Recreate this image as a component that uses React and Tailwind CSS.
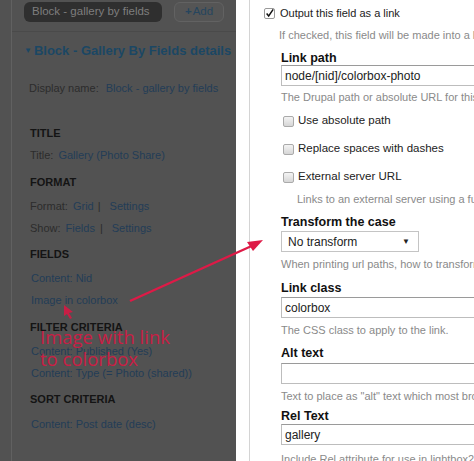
const Row = ({ children, className = "" }) => (
  <div className={"h-[22px] flex items-center whitespace-nowrap " + className}>{children}</div>
);

const Head = ({ children, className = "" }) => (
  <Row className={"font-bold text-[11px] text-[#141414] pl-[18px] " + className}>{children}</Row>
);

const Item = ({ children, className = "" }) => (
  <Row className={"text-[11px] text-[#233d57] pl-[19px] " + className}>{children}</Row>
);

const Box = ({ checked }) => (
  <span
    className={
      "inline-flex w-[11px] h-[11px] rounded-[2px] border items-center justify-center shrink-0 " +
      (checked ? "border-[#999] bg-white" : "border-[#aaa] bg-gradient-to-b from-[#f4f4f4] to-[#d6d6d6]")
    }
  >
    {checked && (
      <svg width="11" height="11" viewBox="0 0 11 11">
        <path d="M2 5.5 L4.5 8.5 L10 0.5" fill="none" stroke="#111" strokeWidth="1.8" />
      </svg>
    )}
  </span>
);

const Desc = ({ children, className = "" }) => (
  <div className={"text-[11px] text-[#8a8a8a] whitespace-nowrap " + className}>{children}</div>
);

const Label = ({ children, className = "" }) => (
  <div className={"text-[12.5px] font-bold text-[#111] h-[16px] leading-[16px] " + className}>{children}</div>
);

const Input = ({ value, className = "" }) => (
  <div
    className={
      "h-[21px] w-[260px] border border-[#bdbdbd] border-t-[#9a9a9a] px-[3px] text-[12px] text-[#222] flex items-center " +
      className
    }
  >
    {value}
  </div>
);

export default function App() {
  return (
    <div className="relative w-[474px] h-[461px] overflow-hidden flex bg-white" style={{ fontFamily: '"Liberation Sans", Arial, sans-serif' }}>
      {/* left, dimmed */}
      <div className="w-[236px] shrink-0 h-full bg-[#525252] flex overflow-hidden">
        <div className="w-[12px] shrink-0 border-r border-[#616161]"></div>
        <div className="flex-1 flex flex-col">
          <div className="h-[32px] border-b border-[#4a4a4a] flex items-start pt-[2px] pl-[12px] gap-[12px]">
            <div className="h-[20px] w-[138px] rounded-[6px] bg-[#2f2f2f] text-[11.5px] text-[#7e7e7e] flex items-center pl-[8px] whitespace-nowrap overflow-hidden">
              Block - gallery by fields
            </div>
            <div className="h-[20px] w-[50px] rounded-[6px] border border-[#626262] bg-[#555] text-[11.5px] text-[#26455e] flex items-center justify-center">
              <span className="font-bold mr-[1px]">+</span>Add
            </div>
          </div>
          <div className="mt-[9px] h-[20px] flex items-center pl-[12px] text-[13px] font-bold text-[#1b4764] whitespace-nowrap">
            <span className="text-[8px] mr-[2px]">▼</span>Block - Gallery By Fields details
          </div>
          <Row className="mt-[16px] pl-[17px] text-[11px]">
            <span className="text-[#2c2c2c]">Display name:</span>
            <span className="text-[#233d57] ml-[7px]">Block - gallery by fields</span>
          </Row>
          <Head className="mt-[23px]">TITLE</Head>
          <Row className="pl-[18px] text-[11px]">
            <span className="text-[#2c2c2c]">Title:</span>
            <span className="text-[#233d57] ml-[5px]">Gallery (Photo Share)</span>
          </Row>
          <Head className="mt-[5px]">FORMAT</Head>
          <Row className="mt-[2px] pl-[18px] text-[11px]">
            <span className="text-[#2c2c2c]">Format:</span>
            <span className="text-[#233d57] ml-[5px]">Grid</span>
            <span className="text-[#2c2c2c] ml-[4px]">|</span>
            <span className="text-[#233d57] ml-[9px]">Settings</span>
          </Row>
          <Row className="pl-[18px] text-[11px]">
            <span className="text-[#2c2c2c]">Show:</span>
            <span className="text-[#233d57] ml-[5px]">Fields</span>
            <span className="text-[#2c2c2c] ml-[5px]">|</span>
            <span className="text-[#233d57] ml-[9px]">Settings</span>
          </Row>
          <Head className="mt-[4px]">FIELDS</Head>
          <Item className="mt-[2px]">Content: Nid</Item>
          <Item>Image in colorbox</Item>
          <Head className="mt-[5px]">FILTER CRITERIA</Head>
          <Item className="mt-[2px]">Content: Published (Yes)</Item>
          <Item>Content: Type (= Photo (shared))</Item>
          <Head className="mt-[4px]">SORT CRITERIA</Head>
          <Item className="mt-[3px]">Content: Post date (desc)</Item>
        </div>
      </div>

      {/* right form */}
      <div className="w-[14px] shrink-0 border-r border-[#d4d4d4]"></div>
      <div className="flex-1 relative overflow-hidden">
        <div className="h-[26px] flex items-center pl-[14px] gap-[5px] text-[11px] text-[#222] whitespace-nowrap">
          <Box checked />
          <span>Output this field as a link</span>
        </div>
        <Desc className="pl-[29px] mt-[3px] h-[12px] leading-[12px]">If checked, this field will be made into a link.</Desc>
        <div className="pl-[31px]">
          <Label className="mt-[9px]">Link path</Label>
          <Input value="node/[nid]/colorbox-photo" className="mt-[-1px]" />
          <Desc className="mt-[5px] h-[12px] leading-[12px]">The Drupal path or absolute URL for this link.</Desc>
          <div className="mt-[11px] h-[14px] flex items-center gap-[4px] pl-[2px] text-[11.5px] text-[#222]">
            <Box />
            <span>Use absolute path</span>
          </div>
          <div className="mt-[14px] h-[14px] flex items-center gap-[4px] pl-[2px] text-[11.5px] text-[#222]">
            <Box />
            <span>Replace spaces with dashes</span>
          </div>
          <div className="mt-[14px] h-[14px] flex items-center gap-[4px] pl-[2px] text-[11.5px] text-[#222]">
            <Box />
            <span>External server URL</span>
          </div>
          <Desc className="pl-[16px] mt-[9px] h-[12px] leading-[12px]">Links to an external server using a full URL</Desc>
          <Label className="mt-[9px]">Transform the case</Label>
          <div className="mt-[1px] h-[21px] w-[138px] border border-[#c4c4c4] flex items-center justify-between px-[6px] text-[12px] text-[#222]">
            <span>No transform</span>
            <span className="text-[8px] mr-[2px]">▼</span>
          </div>
          <Desc className="mt-[6px] h-[12px] leading-[12px]">When printing url paths, how to transform the case</Desc>
          <Label className="mt-[10px]">Link class</Label>
          <Input value="colorbox" className="mt-[1px]" />
          <Desc className="mt-[6px] h-[12px] leading-[12px]">The CSS class to apply to the link.</Desc>
          <Label className="mt-[9px]">Alt text</Label>
          <Input value="" className="mt-[2px]" />
          <Desc className="mt-[6px] h-[12px] leading-[12px]">Text to place as "alt" text which most browsers display</Desc>
          <Label className="mt-[6px]">Rel Text</Label>
          <Input value="gallery" className="mt-[0px]" />
          <Desc className="mt-[8px] h-[12px] leading-[12px]">Include Rel attribute for use in lightbox2 or other</Desc>
        </div>
      </div>

      {/* annotation */}
      <div className="absolute left-[40px] top-[326px] text-[18.5px] leading-[22px] text-[#c81e45] whitespace-nowrap" style={{ fontFamily: '"Open Sans", "DejaVu Sans", sans-serif' }}>
        <div>Image with link</div>
        <div>to colorbox</div>
      </div>
      <svg className="absolute left-0 top-0 pointer-events-none" width="474" height="461" viewBox="0 0 474 461">
        <line x1="130" y1="301" x2="256" y2="244" stroke="#de1a47" strokeWidth="2.4" />
        <polygon points="263,240 247,242 253,251" fill="#de1a47" />
        <polygon points="64,305 73,312 69,313 72,318 70,319 67,314 64,316" fill="#c81e45" />
      </svg>
    </div>
  );
}
